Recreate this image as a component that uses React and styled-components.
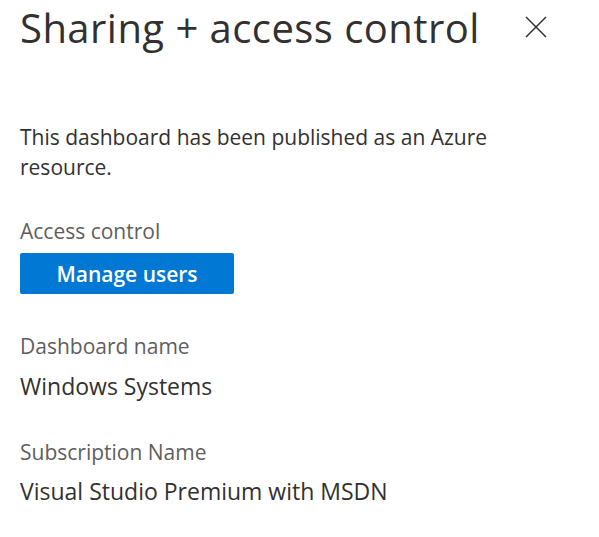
import React from "react";
import styled, { createGlobalStyle } from "styled-components";

const Global = createGlobalStyle`
  html, body { margin: 0; padding: 0; background: #ffffff; }
  body { font-family: "Open Sans", "Noto Sans", sans-serif; color: #323130; }
`;

const Panel = styled.div`
  width: 599px;
  height: 537px;
  box-sizing: border-box;
  padding: 0 20px;
  display: flex;
  flex-direction: column;
`;

const Header = styled.header`
  display: flex;
  align-items: flex-start;
  justify-content: space-between;
  height: 50px;
  padding-right: 32px;
`;

const Title = styled.h1`
  margin: 6px 0 0;
  font-size: 40px;
  line-height: 44px;
  font-weight: 400;
  color: #323130;
  letter-spacing: 0.45px;
  white-space: nowrap;
`;

const CloseButton = styled.button`
  border: 0;
  background: none;
  padding: 0;
  width: 22px;
  height: 22px;
  margin-top: 16px;
  display: flex;
  align-items: center;
  justify-content: center;
  cursor: pointer;
`;

const Body = styled.div`
  display: flex;
  flex-direction: column;
  padding-top: 72px;
`;

const Para = styled.p`
  margin: 0;
  font-size: 21px;
  line-height: 30px;
  color: #323130;
  max-width: 490px;
`;

const Section = styled.section`
  display: flex;
  flex-direction: column;
  margin-top: ${(p) => p.$top}px;
`;

const Label = styled.div`
  font-size: 21px;
  line-height: 28px;
  color: #605e5c;
`;

const Value = styled.div`
  font-size: 23px;
  line-height: 30px;
  color: #323130;
  margin-top: ${(p) => p.$gap || 0}px;
`;

const PrimaryButton = styled.button`
  width: 214px;
  height: 41px;
  margin-top: 8px;
  border: 0;
  border-radius: 2px;
  background: #0078d4;
  color: #ffffff;
  font-family: inherit;
  font-size: 21px;
  font-weight: 600;
  padding: 0;
  cursor: pointer;
`;

const CloseIcon = () => (
  <svg width="22" height="22" viewBox="0 0 22 22" fill="none" stroke="#323130" strokeWidth="1.5">
    <path d="M1 1 L21 21 M21 1 L1 21" />
  </svg>
);

export default function App() {
  return (
    <>
      <Global />
      <Panel>
        <Header>
          <Title>Sharing + access control</Title>
          <CloseButton aria-label="Close">
            <CloseIcon />
          </CloseButton>
        </Header>
        <Body>
          <Para>This dashboard has been published as an Azure resource.</Para>
          <Section $top={35}>
            <Label>Access control</Label>
            <PrimaryButton>Manage users</PrimaryButton>
          </Section>
          <Section $top={38}>
            <Label>Dashboard name</Label>
            <Value $gap={11}>Windows Systems</Value>
          </Section>
          <Section $top={37}>
            <Label>Subscription Name</Label>
            <Value $gap={10}>Visual Studio Premium with MSDN</Value>
          </Section>
        </Body>
      </Panel>
    </>
  );
}
